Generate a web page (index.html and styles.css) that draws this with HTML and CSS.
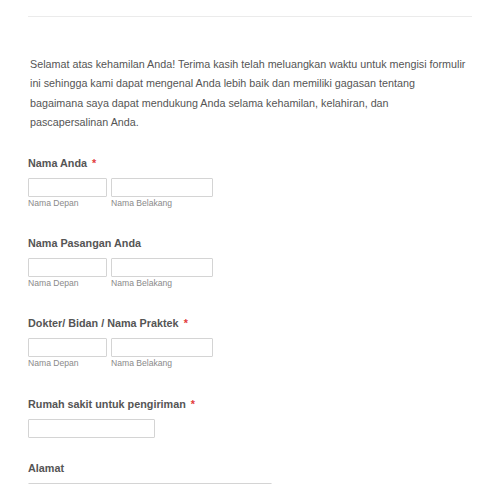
FILE: index.html
```html
<!DOCTYPE html>
<html>
<head>
<meta charset="utf-8">
<link rel="stylesheet" href="styles.css">
</head>
<body>
<div class="page">
  <hr class="divider">
  <p class="intro">Selamat atas kehamilan Anda! Terima kasih telah meluangkan waktu untuk mengisi formulir ini sehingga kami dapat mengenal Anda lebih baik dan memiliki gagasan tentang bagaimana saya dapat mendukung Anda selama kehamilan, kelahiran, dan pascapersalinan Anda.</p>

  <div class="field">
    <div class="label">Nama Anda <span class="req">*</span></div>
    <div class="row">
      <div class="sub"><div class="box first"></div><div class="hint">Nama Depan</div></div>
      <div class="sub"><div class="box last"></div><div class="hint">Nama Belakang</div></div>
    </div>
  </div>

  <div class="field">
    <div class="label">Nama Pasangan Anda</div>
    <div class="row">
      <div class="sub"><div class="box first"></div><div class="hint">Nama Depan</div></div>
      <div class="sub"><div class="box last"></div><div class="hint">Nama Belakang</div></div>
    </div>
  </div>

  <div class="field">
    <div class="label">Dokter/ Bidan / Nama Praktek <span class="req">*</span></div>
    <div class="row">
      <div class="sub"><div class="box first"></div><div class="hint">Nama Depan</div></div>
      <div class="sub"><div class="box last"></div><div class="hint">Nama Belakang</div></div>
    </div>
  </div>

  <div class="field single">
    <div class="label">Rumah sakit untuk pengiriman <span class="req">*</span></div>
    <div class="box wide"></div>
  </div>

  <div class="field">
    <div class="label">Alamat</div>
    <div class="box address"></div>
  </div>
</div>
</body>
</html>
```
FILE: styles.css
```css
html, body {
  margin: 0;
  padding: 0;
  background: #fff;
}
body {
  font-family: "Liberation Sans", Arial, sans-serif;
  color: #555;
}
.page {
  padding: 16px 28px 0 28px;
}
.divider {
  border: 0;
  border-top: 1px solid #ebebeb;
  margin: 0;
}
.intro {
  margin: 38px 4px 0 2px;
  font-size: 10.75px;
  line-height: 19.4px;
  color: #555;
}
.field {
  margin-top: 23px;
}
.field + .field {
  margin-top: 27px;
}
.field.single {
  margin-top: 28px;
}
.field.single + .field {
  margin-top: 23px;
}
.label {
  font-size: 10.8px;
  font-weight: bold;
  color: #555;
  height: 14px;
  line-height: 14px;
  margin-bottom: 8px;
}
.req {
  color: #e23b3b;
  margin-left: 2px;
}
.row {
  display: flex;
  gap: 4px;
}
.box {
  box-sizing: border-box;
  height: 19px;
  border: 1px solid #d4d4d4;
  border-radius: 1px;
  background: #fff;
}
.box.first { width: 79px; }
.box.last { width: 102px; }
.box.wide { width: 127px; }
.box.address { width: 244px; }
.hint {
  font-size: 8.6px;
  color: #8a8a8a;
  line-height: 11px;
  margin-top: 1px;
}
```
